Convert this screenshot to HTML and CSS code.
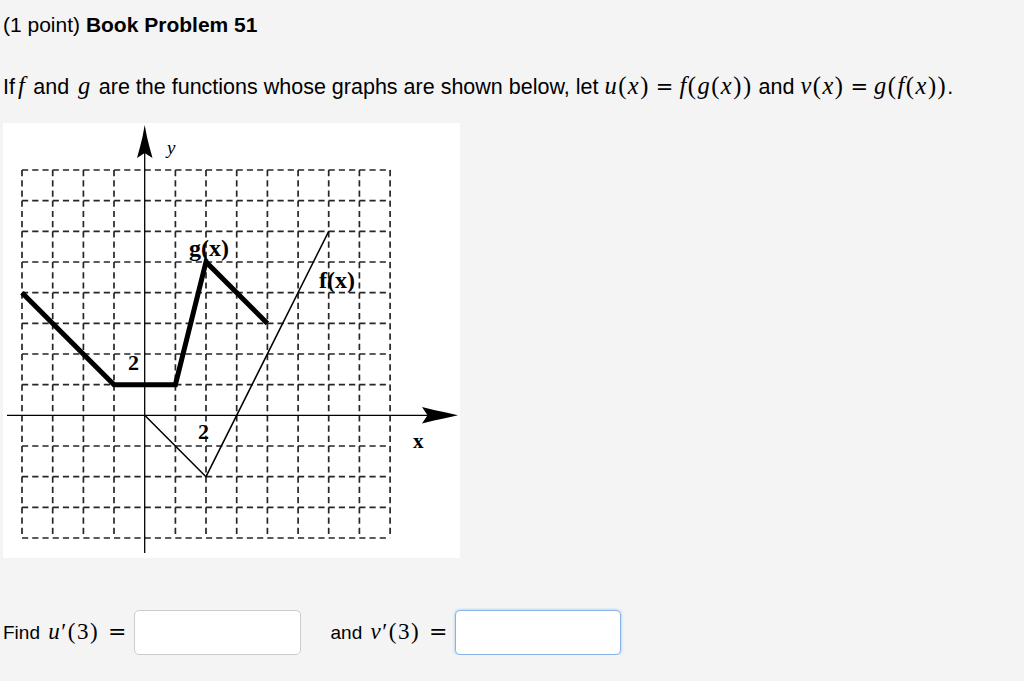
FILE: index.html
```html
<!DOCTYPE html>
<html lang="en">
<head>
<meta charset="utf-8">
<title>Book Problem 51</title>
<link rel="stylesheet" href="styles.css">
</head>
<body>
<div class="problem">
  <h1 class="title">(1 point) <b>Book Problem 51</b></h1>
  <p class="statement">If<span class="math var"><i>f</i></span> and <span class="math var"><i>g</i></span> are the functions whose graphs are shown below, let <span class="math"><i>u</i>(<i>x</i>)<span class="rel">=</span><i>f</i>(<i>g</i>(<i>x</i>))</span> and <span class="math"><i>v</i>(<i>x</i>)<span class="rel">=</span><i>g</i>(<i>f</i>(<i>x</i>))</span>.</p>
  <div class="figure">
    <svg class="graph" width="457" height="435" viewBox="0 0 457 435" xmlns="http://www.w3.org/2000/svg">
      <g class="grid" stroke="#262626" stroke-width="1.7" stroke-dasharray="6.2 4.02" fill="none">
        <line x1="19.0" y1="47" x2="19.0" y2="415"/>
        <line x1="49.7" y1="47" x2="49.7" y2="415"/>
        <line x1="80.4" y1="47" x2="80.4" y2="415"/>
        <line x1="111.0" y1="47" x2="111.0" y2="415"/>
        <line x1="172.4" y1="47" x2="172.4" y2="415"/>
        <line x1="203.0" y1="47" x2="203.0" y2="415"/>
        <line x1="233.7" y1="47" x2="233.7" y2="415"/>
        <line x1="264.4" y1="47" x2="264.4" y2="415"/>
        <line x1="295.1" y1="47" x2="295.1" y2="415"/>
        <line x1="325.7" y1="47" x2="325.7" y2="415"/>
        <line x1="356.4" y1="47" x2="356.4" y2="415"/>
        <line x1="387.1" y1="47" x2="387.1" y2="415"/>
        <line x1="19" y1="47.0" x2="387.1" y2="47.0"/>
        <line x1="19" y1="77.7" x2="387.1" y2="77.7"/>
        <line x1="19" y1="108.3" x2="387.1" y2="108.3"/>
        <line x1="19" y1="139.0" x2="387.1" y2="139.0"/>
        <line x1="19" y1="169.7" x2="387.1" y2="169.7"/>
        <line x1="19" y1="200.4" x2="387.1" y2="200.4"/>
        <line x1="19" y1="231.0" x2="387.1" y2="231.0"/>
        <line x1="19" y1="261.7" x2="387.1" y2="261.7"/>
        <line x1="19" y1="323.0" x2="387.1" y2="323.0"/>
        <line x1="19" y1="353.7" x2="387.1" y2="353.7"/>
        <line x1="19" y1="384.3" x2="387.1" y2="384.3"/>
        <line x1="19" y1="415.0" x2="387.1" y2="415.0"/>
      </g>
      <g class="axes" stroke="#000" stroke-width="1.3">
        <line x1="141.7" y1="430" x2="141.7" y2="20"/>
        <line x1="4" y1="292.3" x2="425" y2="292.3"/>
      </g>
      <polygon points="141.7,2 144,14 146.5,24 149.5,35 141.7,30 134,35 137,24 139.5,14" fill="#000"/>
      <polygon points="455,292.3 443,289.5 431,287 419,284 424.5,292.3 419,300.6 431,297.6 443,295" fill="#000"/>
      <polyline points="19.0,169.7 111.0,261.7 172.4,261.7 203.0,139.0 264.4,200.4" fill="none" stroke="#000" stroke-width="5" stroke-linejoin="miter"/>
      <polyline points="141.7,292.3 203.0,353.7 325.7,108.3" fill="none" stroke="#000" stroke-width="1.5"/>
      <g class="labels" font-family="'Liberation Serif', 'Times New Roman', serif" font-weight="bold" fill="#000">
        <text x="164" y="31" font-size="19" font-style="italic" font-weight="normal">y</text>
        <text x="410" y="325" font-size="21">x</text>
        <text x="186" y="133" font-size="24">g(x)</text>
        <text x="316" y="165" font-size="24">f(x)</text>
        <text x="125" y="247" font-size="22">2</text>
        <text x="195" y="316" font-size="22">2</text>
      </g>
    </svg>
  </div>
  <div class="answers">
    <span class="label">Find <span class="math"><i>u</i>′(3)<span class="rel">=</span></span></span>
    <input class="answer" type="text" aria-label="u'(3)">
    <span class="label second">and <span class="math"><i>v</i>′(3)<span class="rel">=</span></span></span>
    <input class="answer focused" type="text" aria-label="v'(3)">
  </div>
</div>
</body>
</html>
```

FILE: styles.css
```css
html, body {
  margin: 0;
  padding: 0;
  background: #f4f4f4;
}

body {
  font-family: "Liberation Sans", Arial, Helvetica, sans-serif;
  font-size: 19px;
  line-height: 24px;
  color: #000;
}

.problem {
  padding: 13px 0 0 3px;
}

.title {
  margin: 0;
  font-size: 21px;
  font-weight: normal;
  line-height: 24px;
}

.title b {
  font-weight: bold;
}

.statement {
  margin: 38px 0 0 0;
  font-size: 21.5px;
  line-height: 24px;
}

.math {
  font-family: "Liberation Serif", "Times New Roman", serif;
  font-size: 24.5px;
  line-height: 0;
  letter-spacing: 1.5px;
}

.math i {
  font-style: italic;
}

.math.var {
  margin: 0 1px 0 3px;
}

.rel {
  font-family: "DejaVu Sans", sans-serif;
  font-size: 21px;
  letter-spacing: 0;
  margin: 0 6px 0 6px;
}

.figure {
  margin-top: 24px;
  width: 457px;
  height: 435px;
  background: #fff;
}

.graph {
  display: block;
}

.answers {
  display: flex;
  align-items: center;
  margin-top: 52px;
  height: 45px;
}

.label {
  white-space: nowrap;
}

.label .math {
  font-size: 23px;
  letter-spacing: 1.5px;
  margin-left: 3px;
}

.label .rel {
  font-size: 22px;
  margin: 0 7px 0 9px;
}

.label.second {
  margin-left: 30px;
}

.answer {
  box-sizing: border-box;
  width: 167px;
  height: 45px;
  margin: 0;
  border: 1px solid #cccccc;
  border-radius: 5px;
  background: #fff;
  font-size: 16px;
  padding: 4px 8px;
  outline: none;
}

.answer.focused {
  width: 166px;
  border-color: #86b4ea;
  box-shadow: 0 0 3px rgba(82, 150, 236, 0.55);
}
```
